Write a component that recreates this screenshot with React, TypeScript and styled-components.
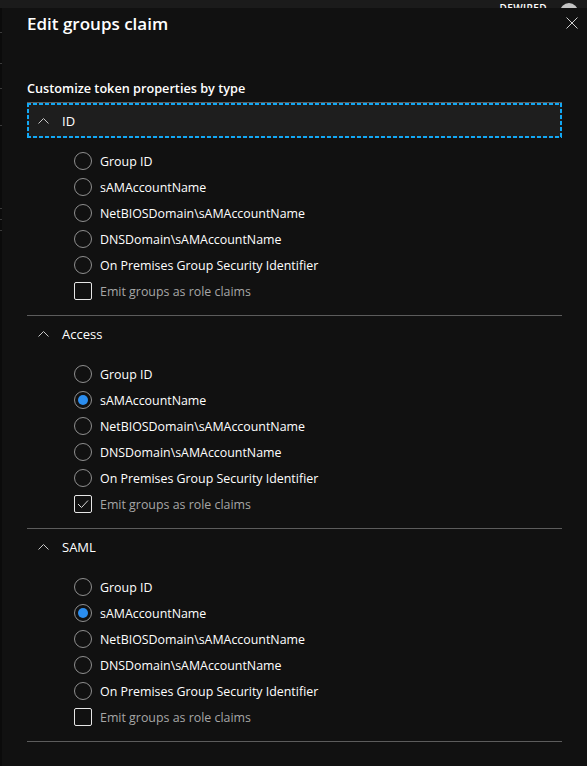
import styled, { createGlobalStyle, css } from "styled-components";

const GlobalStyle = createGlobalStyle`
  html, body {
    margin: 0;
    padding: 0;
    background: #111111;
  }
  body {
    font-family: "Open Sans", "Noto Sans", sans-serif;
    color: #ffffff;
  }
`;

const TopBar = styled.div`
  height: 8px;
  background: #1b1b1b;
  overflow: hidden;
  display: flex;
  justify-content: flex-end;
  align-items: flex-end;
  padding-right: 9px;
  gap: 13px;
`;

const TenantName = styled.span`
  font-size: 10px;
  font-weight: 600;
  line-height: 10px;
  margin-bottom: -5px;
  letter-spacing: 0.4px;
  color: #ffffff;
`;

const Avatar = styled.span`
  width: 18px;
  height: 18px;
  border-radius: 50%;
  background: #c4c4c4;
  margin-bottom: -13px;
`;

const Page = styled.div`
  display: flex;
  min-height: 758px;
`;

const LeftStrip = styled.div`
  width: 2px;
  background: #0b0b0b;
  display: flex;
  flex-direction: column;
`;

const StripTick = styled.div<{ $top: number }>`
  height: 1px;
  margin-top: ${(p) => p.$top}px;
  background: #3a3a3a;
`;

const Panel = styled.div`
  flex: 1;
  padding: 0 9px 0 25px;
`;

const TitleRow = styled.div`
  display: flex;
  justify-content: space-between;
  align-items: flex-start;
  height: 70px;
`;

const Title = styled.h1`
  margin: 4px 0 0;
  font-size: 17px;
  font-weight: 600;
  line-height: 24px;
`;

const CloseButton = styled.button`
  background: none;
  border: none;
  padding: 0;
  margin-top: 9px;
  width: 12px;
  height: 12px;
  display: flex;
  cursor: pointer;
`;

const Body = styled.div`
  margin-right: 16px;
`;

const SectionLabel = styled.div`
  font-size: 12.7px;
  font-weight: 600;
  line-height: 20px;
  height: 24px;
`;

const Groups = styled.div`
  border-bottom: 1px solid #5c5c5c;
`;

const Section = styled.div`
  border-top: 1px solid #5c5c5c;
`;

const focusDash = "#12a8f5";
const hDash = `repeating-linear-gradient(90deg, ${focusDash} 0 4px, transparent 4px 6px)`;
const vDash = `repeating-linear-gradient(180deg, ${focusDash} 0 4px, transparent 4px 6px)`;

const focusRing = css`
  background:
    ${hDash} left top / 100% 2px no-repeat,
    ${hDash} left bottom / 100% 2px no-repeat,
    ${vDash} left top / 2px 100% no-repeat,
    ${vDash} right top / 2px 100% no-repeat,
    #1e1e1e;
`;

const SectionHeader = styled.div<{ $focused?: boolean }>`
  height: 35px;
  display: flex;
  align-items: center;
  gap: 13px;
  padding-left: 11px;
  padding-top: 1px;
  font-size: 13px;
  box-sizing: border-box;
  ${(p) => p.$focused && focusRing}
`;

const Options = styled.div`
  padding: 10px 0 11px 47px;
`;

const OptionRow = styled.label<{ $muted?: boolean }>`
  height: 26px;
  display: flex;
  align-items: center;
  gap: 8px;
  font-size: 12.4px;
  color: ${(p) => (p.$muted ? "#a6a6a6" : "#ffffff")};
`;

const RadioCircle = styled.span<{ $checked?: boolean }>`
  width: 18px;
  height: 18px;
  box-sizing: border-box;
  border-radius: 50%;
  border: 1px solid #8f8f8f;
  display: flex;
  align-items: center;
  justify-content: center;
  &::after {
    content: "";
    width: 10px;
    height: 10px;
    border-radius: 50%;
    background: ${(p) => (p.$checked ? "#2b8ef0" : "transparent")};
  }
`;

const CheckBox = styled.span`
  width: 18px;
  height: 18px;
  box-sizing: border-box;
  border-radius: 2px;
  border: 1px solid #e6e6e6;
  display: flex;
  align-items: center;
  justify-content: center;
`;

const Chevron = () => (
  <svg width="11" height="6" viewBox="0 0 11 6">
    <polyline points="0.5,5.5 5.5,0.5 10.5,5.5" fill="none" stroke="#c8c8c8" strokeWidth="1" />
  </svg>
);

const CloseIcon = () => (
  <svg width="12" height="12" viewBox="0 0 12 12">
    <path d="M0.5 0.5 L11.5 11.5 M11.5 0.5 L0.5 11.5" stroke="#cfcfcf" strokeWidth="1" />
  </svg>
);

const CheckMark = () => (
  <svg width="12" height="10" viewBox="0 0 12 10">
    <polyline points="1,5 4.5,8.5 11,1.5" fill="none" stroke="#d8d8d8" strokeWidth="1" />
  </svg>
);

const options = [
  "Group ID",
  "sAMAccountName",
  "NetBIOSDomain\\sAMAccountName",
  "DNSDomain\\sAMAccountName",
  "On Premises Group Security Identifier",
];

interface ISection {
  name: string;
  selected: number | null;
  emitRoles: boolean;
  focused?: boolean;
}

const sections: ISection[] = [
  { name: "ID", selected: null, emitRoles: false, focused: true },
  { name: "Access", selected: 1, emitRoles: true },
  { name: "SAML", selected: 1, emitRoles: false },
];

const stripTicks = [24, 30, 24, 36, 82, 10, 10];

const App = () => {
  return (
    <>
      <GlobalStyle />
      <TopBar>
        <TenantName>DEWIRED</TenantName>
        <Avatar />
      </TopBar>
      <Page>
        <LeftStrip>
          {stripTicks.map((t, i) => (
            <StripTick key={i} $top={t} />
          ))}
        </LeftStrip>
        <Panel>
          <TitleRow>
            <Title>Edit groups claim</Title>
            <CloseButton aria-label="Close">
              <CloseIcon />
            </CloseButton>
          </TitleRow>
          <Body>
            <SectionLabel>Customize token properties by type</SectionLabel>
            <Groups>
              {sections.map((s) => (
                <Section key={s.name}>
                  <SectionHeader $focused={s.focused}>
                    <Chevron />
                    <span>{s.name}</span>
                  </SectionHeader>
                  <Options>
                    {options.map((o, i) => (
                      <OptionRow key={o}>
                        <RadioCircle $checked={s.selected === i} />
                        {o}
                      </OptionRow>
                    ))}
                    <OptionRow $muted>
                      <CheckBox>{s.emitRoles && <CheckMark />}</CheckBox>
                      Emit groups as role claims
                    </OptionRow>
                  </Options>
                </Section>
              ))}
            </Groups>
          </Body>
        </Panel>
      </Page>
    </>
  );
};

export default App;
